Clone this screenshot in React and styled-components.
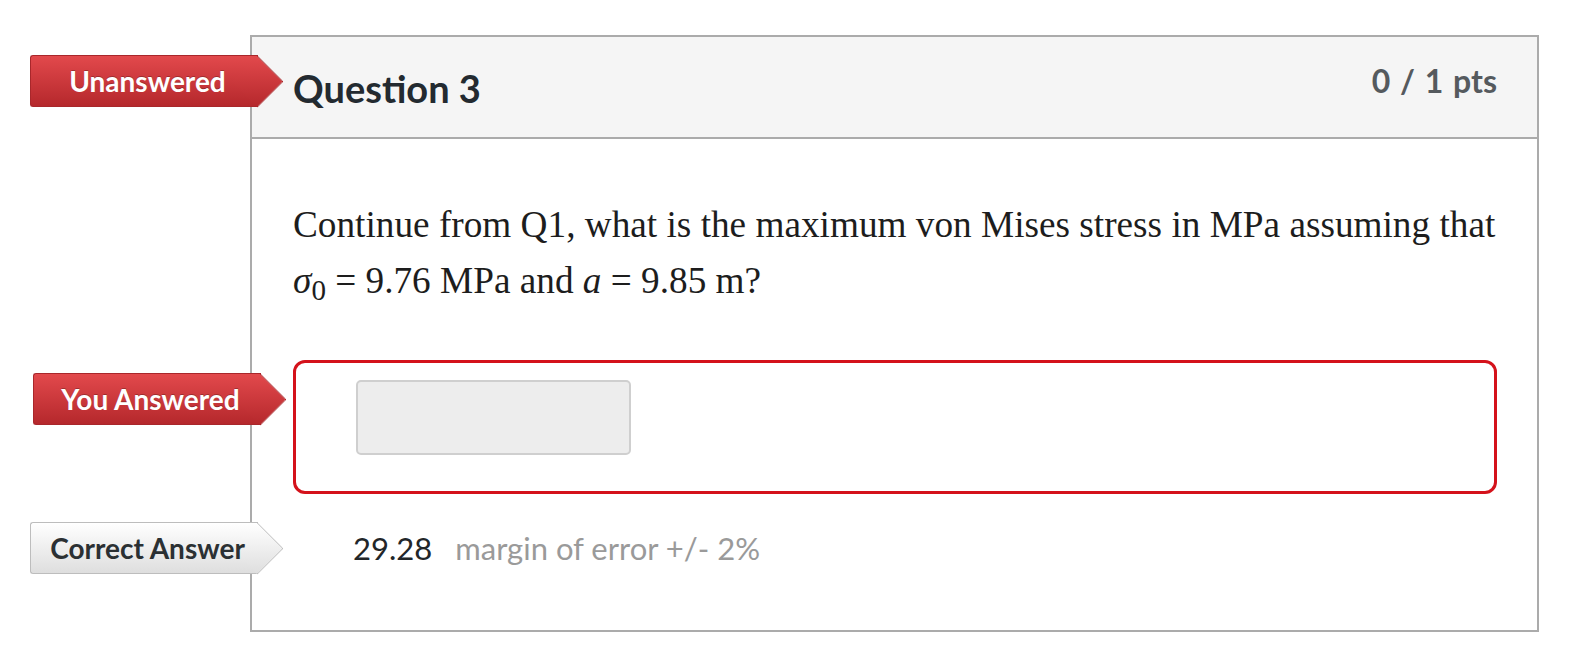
import React from 'react';
import styled, { createGlobalStyle, css } from 'styled-components';

const GlobalStyle = createGlobalStyle`
  body {
    margin: 0;
    background: #ffffff;
    font-family: Lato, "Open Sans", sans-serif;
  }
`;

const Page = styled.div`
  padding: 35px 0 0 250px;
`;

const Panel = styled.div`
  width: 1289px;
  box-sizing: border-box;
  border: 2px solid #ababab;
  background: #ffffff;
`;

const Header = styled.div`
  position: relative;
  display: flex;
  justify-content: space-between;
  align-items: flex-start;
  height: 100px;
  padding: 0 40px 0 41px;
  background: #f5f5f5;
  border-bottom: 2px solid #ababab;
`;

const Title = styled.h2`
  margin: 32px 0 0;
  font-size: 38px;
  line-height: 1;
  font-weight: 700;
  color: #232a30;
`;

const Points = styled.div`
  margin-top: 28px;
  font-size: 32px;
  line-height: 1;
  font-weight: 700;
  word-spacing: 2px;
  color: #555a5e;
`;

const redBadge = css`
  color: #ffffff;
  border: 1px solid #a9272b;
  border-right: none;
  background: linear-gradient(#e2494c, #b5282c);
  text-shadow: 0 -1px 0 rgba(0, 0, 0, 0.25);

  &::after {
    border-top: 1px solid #a9272b;
    border-right: 1px solid #a9272b;
    background: linear-gradient(135deg, #e2494c, #b5282c);
  }
`;

const greyBadge = css`
  color: #2b3033;
  border: 1px solid #bdbdbd;
  border-right: none;
  background: linear-gradient(#ffffff, #dedede);

  &::after {
    border-top: 1px solid #bdbdbd;
    border-right: 1px solid #bdbdbd;
    background: linear-gradient(135deg, #ffffff, #dedede);
  }
`;

// label tag with an arrow tip, hangs off the left side of the panel
const Badge = styled.div`
  position: absolute;
  left: ${(p) => p.$left}px;
  top: ${(p) => p.$top}px;
  width: 228px;
  height: 52px;
  box-sizing: border-box;
  display: flex;
  align-items: center;
  justify-content: center;
  padding-left: 6px;
  border-radius: 3px 0 0 3px;
  font-family: Lato, sans-serif;
  font-size: 28px;
  font-weight: 700;
  white-space: nowrap;

  span {
    position: relative;
    z-index: 1;
  }

  &::after {
    content: '';
    position: absolute;
    right: -18px;
    top: 7px;
    width: 36px;
    height: 36px;
    transform: rotate(45deg);
    border-radius: 0 2px 0 0;
  }

  ${(p) => (p.$kind === 'red' ? redBadge : greyBadge)}
`;

const Body = styled.div`
  padding: 58px 40px 56px 41px;
`;

const QuestionText = styled.p`
  margin: 0;
  font-family: "Liberation Serif", "Times New Roman", serif;
  font-size: 37.25px;
  line-height: 56px;
  color: #1d1d1d;

  i {
    font-style: italic;
  }

  sub {
    font-size: 0.78em;
    vertical-align: -0.25em;
    line-height: 0;
  }
`;

const AnswerBox = styled.div`
  position: relative;
  margin-top: 51px;
  height: 134px;
  box-sizing: border-box;
  padding: 17px 0 0 60px;
  border: 3px solid #d4121b;
  border-radius: 12px;
`;

const EmptyInput = styled.div`
  width: 275px;
  height: 75px;
  box-sizing: border-box;
  background: #ededed;
  border: 2px solid #cfcfcf;
  border-radius: 5px;
`;

const CorrectRow = styled.div`
  position: relative;
  margin-top: 28px;
  height: 52px;
  display: flex;
  align-items: center;
  padding-left: 60px;
  font-size: 31px;
  line-height: 1;
`;

const Value = styled.span`
  color: #222629;
`;

const Margin = styled.span`
  margin-left: 23px;
  color: #9a9a9a;
`;

export default function App() {
  return (
    <Page>
      <GlobalStyle />
      <Panel>
        <Header>
          <Badge $kind="red" $left={-222} $top={18}>
            <span>Unanswered</span>
          </Badge>
          <Title>Question 3</Title>
          <Points>0 / 1 pts</Points>
        </Header>
        <Body>
          <QuestionText>
            Continue from Q1, what is the maximum von Mises stress in MPa assuming that{' '}
            <i>σ</i><sub>0</sub> = 9.76 MPa and <i>a</i> = 9.85 m?
          </QuestionText>
          <AnswerBox>
            <Badge $kind="red" $left={-263} $top={10}>
              <span>You Answered</span>
            </Badge>
            <EmptyInput />
          </AnswerBox>
          <CorrectRow>
            <Badge $kind="grey" $left={-263} $top={0}>
              <span>Correct Answer</span>
            </Badge>
            <Value>29.28</Value>
            <Margin>margin of error +/- 2%</Margin>
          </CorrectRow>
        </Body>
      </Panel>
    </Page>
  );
}
